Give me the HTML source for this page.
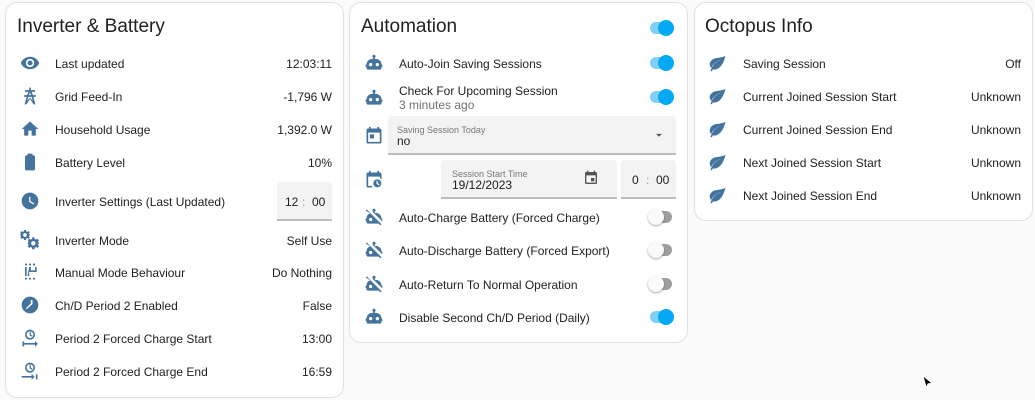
<!DOCTYPE html>
<html><head><meta charset="utf-8">
<style>
*{box-sizing:border-box;margin:0;padding:0}
body{width:1035px;height:400px;background:#fafafa;font-family:"Liberation Sans",sans-serif;color:#212121;position:relative;overflow:hidden}
.card{position:absolute;background:#fff;border:1px solid #e0e0e0;border-radius:12px}
.t{position:absolute;font-size:19px;color:#212121}
.ic{position:absolute;width:20px;height:20px;fill:#44739e}
.l{position:absolute;font-size:12px;line-height:14px;white-space:nowrap;margin-top:1px}
.v{position:absolute;font-size:12px;line-height:14px;text-align:right;white-space:nowrap;margin-top:1px}
.sw{position:absolute;width:26px;height:20px}
.sw .tr{position:absolute;left:2px;top:4px;width:22px;height:12px;border-radius:6px}
.sw .k{position:absolute;top:2px;width:16px;height:16px;border-radius:50%}
.on .tr{background:#7fd0f7}.on .k{left:10px;background:#03a9f4}
.off .tr{background:#9e9e9e}.off .k{left:0px;background:#fafafa;box-shadow:0 1px 2px rgba(0,0,0,.35)}
.fld{position:absolute;background:#f3f3f3;border-bottom:2px solid #bdbdbd;border-radius:4px 4px 0 0}
</style></head><body>

<!-- Card 1 -->
<div class="card" style="left:5px;top:2px;width:339px;height:396px"></div>
<div class="t" style="left:17px;top:16px">Inverter &amp; Battery</div>
<svg class="ic" style="left:20px;top:53px" viewBox="0 0 24 24"><path d="M12,9A3,3 0 0,0 9,12A3,3 0 0,0 12,15A3,3 0 0,0 15,12A3,3 0 0,0 12,9M12,17A5,5 0 0,1 7,12A5,5 0 0,1 12,7A5,5 0 0,1 17,12A5,5 0 0,1 12,17M12,4.5C7,4.5 2.73,7.61 1,12C2.73,16.39 7,19.5 12,19.5C17,19.5 21.27,16.39 23,12C21.27,7.61 17,4.5 12,4.5Z"/></svg>
<svg class="ic" style="left:20px;top:86px" viewBox="0 0 24 24"><path d="M11 2h2v3h5v2h-4l1.5 4H19v2h-3l2.5 9h-2.2L12 15.5 7.7 22H5.5L8 13H5v-2h3.5L10 7H6V5h5V2m1 5.5L10.8 11h2.4L12 7.5m-2 5.5l-1.2 4.5L12 14l3.2 3.5L14 13h-4z"/></svg>
<svg class="ic" style="left:20px;top:119px" viewBox="0 0 24 24"><path d="M10,20V14H14V20H19V12H22L12,3L2,12H5V20H10Z"/></svg>
<svg class="ic" style="left:20px;top:152px" viewBox="0 0 24 24"><path d="M16.67,4H15V2H9V4H7.33A1.33,1.33 0 0,0 6,5.33V20.67C6,21.4 6.6,22 7.33,22H16.67A1.33,1.33 0 0,0 18,20.67V5.33C18,4.6 17.4,4 16.67,4Z"/></svg>
<svg class="ic" style="left:20px;top:191px" viewBox="0 0 24 24"><path d="M12,2A10,10 0 0,0 2,12A10,10 0 0,0 12,22A10,10 0 0,0 22,12A10,10 0 0,0 12,2M16.2,16.2L11,13V7H12.5V12.2L17,14.9L16.2,16.2Z"/></svg>
<svg class="ic" style="left:20px;top:230px" viewBox="0 0 24 24"><g transform="translate(6,6) scale(.55) translate(-12,-12)"><path d="M12 8a4 4 0 1 0 0 8 4 4 0 0 0 0-8zM10 1h4l.6 3 2.4 1.2 2.6-1.6 2.8 2.8-1.6 2.6L22 11.4l1 .6v0h0v0l-1 .6-1.2 2.4 1.6 2.6-2.8 2.8-2.6-1.6L14.6 20 14 23h-4l-.6-3-2.4-1.2-2.6 1.6-2.8-2.8 1.6-2.6L2 12.6 1 12l1-.6L3.2 9 1.6 6.4l2.8-2.8L7 5.2 9.4 4z" fill-rule="evenodd"/></g><g transform="translate(16,16) scale(.65) translate(-12,-12)"><path d="M12 8a4 4 0 1 0 0 8 4 4 0 0 0 0-8zM10 1h4l.6 3 2.4 1.2 2.6-1.6 2.8 2.8-1.6 2.6L22 11.4l1 .6l-1 .6-1.2 2.4 1.6 2.6-2.8 2.8-2.6-1.6L14.6 20 14 23h-4l-.6-3-2.4-1.2-2.6 1.6-2.8-2.8 1.6-2.6L2 12.6 1 12l1-.6L3.2 9 1.6 6.4l2.8-2.8L7 5.2 9.4 4z" fill-rule="evenodd"/></g></svg>
<svg class="ic" style="left:20px;top:262px" viewBox="0 0 24 24"><path d="M6 2h2.5v2H6zm4.75 0h2.5v2h-2.5zM15.5 2H18v2h-2.5zM6 19h2.5v2H6zm4.75 0h2.5v2h-2.5zM6 6h2v11H6zm5 0h2v4h5V6h2v6h-9v5h-2zM15.5 19H18v2h-2.5z"/></svg>
<svg class="ic" style="left:20px;top:295px" viewBox="0 0 24 24"><path d="M12,2A10,10 0 0,0 2,12A10,10 0 0,0 12,22A10,10 0 0,0 22,12A10,10 0 0,0 12,2M8,17L7,16L13,10V6H15V11Z"/></svg>
<svg class="ic" style="left:20px;top:328px" viewBox="0 0 24 24"><path d="M12 2a6 6 0 1 1 0 12 6 6 0 0 1 0-12m0 2a4 4 0 1 0 0 8 4 4 0 0 0 0-8m-.5 1h1.5v3l2 1.2-.7 1.2-2.8-1.6zM3 16h2v2h13v-2.5l3.5 3.5L18 22.5V20H5v2H3z"/></svg>
<svg class="ic" style="left:20px;top:361px" viewBox="0 0 24 24"><path d="M12 2a6 6 0 1 1 0 12 6 6 0 0 1 0-12m0 2a4 4 0 1 0 0 8 4 4 0 0 0 0-8m-.5 1h1.5v3l2 1.2-.7 1.2-2.8-1.6zM2 18h12v-2.5l3.5 3.5L14 22.5V20H2zm17-2h2v6h-2z"/></svg>
<div class="l" style="left:55px;top:56px">Last updated</div><div class="v" style="right:703px;top:56px">12:03:11</div>
<div class="l" style="left:55px;top:89px">Grid Feed-In</div><div class="v" style="right:703px;top:89px">-1,796 W</div>
<div class="l" style="left:55px;top:122px">Household Usage</div><div class="v" style="right:703px;top:122px">1,392.0 W</div>
<div class="l" style="left:55px;top:155px">Battery Level</div><div class="v" style="right:703px;top:155px">10%</div>
<div class="l" style="left:55px;top:194px">Inverter Settings (Last Updated)</div>
<div class="fld" style="left:277px;top:182px;width:55px;height:39px"></div>
<div class="l" style="left:285px;top:194px">12</div><div class="l" style="left:302px;top:194px;color:#999">:</div><div class="l" style="left:312px;top:194px">00</div>
<div class="l" style="left:55px;top:233px">Inverter Mode</div><div class="v" style="right:703px;top:233px">Self Use</div>
<div class="l" style="left:55px;top:265px">Manual Mode Behaviour</div><div class="v" style="right:703px;top:265px">Do Nothing</div>
<div class="l" style="left:55px;top:298px">Ch/D Period 2 Enabled</div><div class="v" style="right:703px;top:298px">False</div>
<div class="l" style="left:55px;top:331px">Period 2 Forced Charge Start</div><div class="v" style="right:703px;top:331px">13:00</div>
<div class="l" style="left:55px;top:364px">Period 2 Forced Charge End</div><div class="v" style="right:703px;top:364px">16:59</div>

<!-- Card 2 -->
<div class="card" style="left:349px;top:2px;width:339px;height:341px"></div>
<div class="t" style="left:361px;top:16px">Automation</div>
<div class="sw on" style="left:648px;top:18px"><div class="tr"></div><div class="k"></div></div>
<svg class="ic" style="left:364px;top:53px" viewBox="0 0 24 24"><path d="M12 2a2 2 0 0 1 1 3.7V7h1a7 7 0 0 1 7 7h1v3h-1v1a2 2 0 0 1-2 2H5a2 2 0 0 1-2-2v-1H2v-3h1a7 7 0 0 1 7-7h1V5.7A2 2 0 0 1 12 2M8 12a2 2 0 1 0 0 4 2 2 0 0 0 0-4m8 0a2 2 0 1 0 0 4 2 2 0 0 0 0-4z"/></svg>
<svg class="ic" style="left:364px;top:88px" viewBox="0 0 24 24"><path d="M12 2a2 2 0 0 1 1 3.7V7h1a7 7 0 0 1 7 7h1v3h-1v1a2 2 0 0 1-2 2H5a2 2 0 0 1-2-2v-1H2v-3h1a7 7 0 0 1 7-7h1V5.7A2 2 0 0 1 12 2M8 12a2 2 0 1 0 0 4 2 2 0 0 0 0-4m8 0a2 2 0 1 0 0 4 2 2 0 0 0 0-4z"/></svg>
<div class="l" style="left:399px;top:56px">Auto-Join Saving Sessions</div>
<div class="sw on" style="left:648px;top:53px"><div class="tr"></div><div class="k"></div></div>
<div class="l" style="left:399px;top:83px">Check For Upcoming Session</div>
<div class="l" style="left:399px;top:97px;color:#727272">3 minutes ago</div>
<div class="sw on" style="left:648px;top:87px"><div class="tr"></div><div class="k"></div></div>
<svg class="ic" style="left:364px;top:126px" viewBox="0 0 24 24"><path d="M19,19H5V8H19M16,1V3H8V1H6V3H5C3.89,3 3,3.89 3,5V19A2,2 0 0,0 5,21H19A2,2 0 0,0 21,19V5C21,3.89 20.1,3 19,3H18V1M7,10H12V15H7Z"/></svg>
<div class="fld" style="left:388px;top:116px;width:288px;height:39px"></div>
<div class="l" style="left:397px;top:122px;font-size:9px;color:#777">Saving Session Today</div>
<div class="l" style="left:397px;top:133px">no</div>
<svg style="position:absolute;left:652px;top:128px;width:14px;height:14px;fill:#555" viewBox="0 0 24 24"><path d="M7,10L12,15L17,10H7Z"/></svg>
<svg class="ic" style="left:364px;top:170px" viewBox="0 0 24 24"><path d="M15 13h1.5v2.8l2.4 1.4-.8 1.2L15 16.6zM19 8H5v11h4.5a7 7 0 0 0 .5 2H5a2 2 0 0 1-2-2V5a2 2 0 0 1 2-2h1V1h2v2h8V1h2v2h1a2 2 0 0 1 2 2v6.1a7 7 0 0 0-2-1.3zm-3 3.2a4.8 4.8 0 1 0 0 9.6 4.8 4.8 0 0 0 0-9.6z"/></svg>
<div class="fld" style="left:441px;top:160px;width:176px;height:39px"></div>
<div class="l" style="left:452px;top:166px;font-size:9px;color:#777">Session Start Time</div>
<div class="l" style="left:452px;top:177px">19/12/2023</div>
<svg style="position:absolute;left:583px;top:170px;width:16px;height:16px;fill:#555" viewBox="0 0 24 24"><path d="M19,19H5V8H19M16,1V3H8V1H6V3H5C3.89,3 3,3.89 3,5V19A2,2 0 0,0 5,21H19A2,2 0 0,0 21,19V5C21,3.89 20.1,3 19,3H18V1M12,12H17V17H12Z"/></svg>
<div class="fld" style="left:621px;top:160px;width:55px;height:39px"></div>
<div class="l" style="left:632px;top:172px">0</div><div class="l" style="left:646px;top:172px;color:#999">:</div><div class="l" style="left:656px;top:172px">00</div>
<svg class="ic" style="left:364px;top:207px" viewBox="0 0 24 24"><path d="M2 4.3L3.3 3 21 20.7 19.7 22l-2-2H5a2 2 0 0 1-2-2v-1H2v-3h1a7 7 0 0 1 4.5-6.5zM12 2a2 2 0 0 1 1 3.7V7h1a7 7 0 0 1 7 7h1v3h-.3L11.4 6.7 11 7V5.7A2 2 0 0 1 12 2M8 13a2 2 0 1 0 0 4 2 2 0 0 0 0-4z"/></svg>
<svg class="ic" style="left:364px;top:240px" viewBox="0 0 24 24"><path d="M2 4.3L3.3 3 21 20.7 19.7 22l-2-2H5a2 2 0 0 1-2-2v-1H2v-3h1a7 7 0 0 1 4.5-6.5zM12 2a2 2 0 0 1 1 3.7V7h1a7 7 0 0 1 7 7h1v3h-.3L11.4 6.7 11 7V5.7A2 2 0 0 1 12 2M8 13a2 2 0 1 0 0 4 2 2 0 0 0 0-4z"/></svg>
<svg class="ic" style="left:364px;top:274px" viewBox="0 0 24 24"><path d="M2 4.3L3.3 3 21 20.7 19.7 22l-2-2H5a2 2 0 0 1-2-2v-1H2v-3h1a7 7 0 0 1 4.5-6.5zM12 2a2 2 0 0 1 1 3.7V7h1a7 7 0 0 1 7 7h1v3h-.3L11.4 6.7 11 7V5.7A2 2 0 0 1 12 2M8 13a2 2 0 1 0 0 4 2 2 0 0 0 0-4z"/></svg>
<svg class="ic" style="left:364px;top:307px" viewBox="0 0 24 24"><path d="M12 2a2 2 0 0 1 1 3.7V7h1a7 7 0 0 1 7 7h1v3h-1v1a2 2 0 0 1-2 2H5a2 2 0 0 1-2-2v-1H2v-3h1a7 7 0 0 1 7-7h1V5.7A2 2 0 0 1 12 2M8 12a2 2 0 1 0 0 4 2 2 0 0 0 0-4m8 0a2 2 0 1 0 0 4 2 2 0 0 0 0-4z"/></svg>
<div class="l" style="left:399px;top:210px">Auto-Charge Battery (Forced Charge)</div>
<div class="sw off" style="left:648px;top:207px"><div class="tr"></div><div class="k"></div></div>
<div class="l" style="left:399px;top:243px">Auto-Discharge Battery (Forced Export)</div>
<div class="sw off" style="left:648px;top:240px"><div class="tr"></div><div class="k"></div></div>
<div class="l" style="left:399px;top:277px">Auto-Return To Normal Operation</div>
<div class="sw off" style="left:648px;top:274px"><div class="tr"></div><div class="k"></div></div>
<div class="l" style="left:399px;top:310px">Disable Second Ch/D Period (Daily)</div>
<div class="sw on" style="left:648px;top:307px"><div class="tr"></div><div class="k"></div></div>

<!-- Card 3 -->
<div class="card" style="left:694px;top:2px;width:339px;height:219px"></div>
<div class="t" style="left:705px;top:16px">Octopus Info</div>
<svg class="ic" style="left:708px;top:53px" viewBox="0 0 24 24"><path d="M21 3s-3 17-14 17c-.4 0-.9-.1-1.3-.3L4.7 22 3 21.3C5 16 7.6 10.8 15.5 8.5c0 0-8.5 1.5-11.7 9.8C3.8 18.3 2 15.5 2 13.5 2 11.5 4 7.3 9 6.3 14 5.3 20 5 21 3z"/></svg>
<svg class="ic" style="left:708px;top:86px" viewBox="0 0 24 24"><path d="M21 3s-3 17-14 17c-.4 0-.9-.1-1.3-.3L4.7 22 3 21.3C5 16 7.6 10.8 15.5 8.5c0 0-8.5 1.5-11.7 9.8C3.8 18.3 2 15.5 2 13.5 2 11.5 4 7.3 9 6.3 14 5.3 20 5 21 3z"/></svg>
<svg class="ic" style="left:708px;top:119px" viewBox="0 0 24 24"><path d="M21 3s-3 17-14 17c-.4 0-.9-.1-1.3-.3L4.7 22 3 21.3C5 16 7.6 10.8 15.5 8.5c0 0-8.5 1.5-11.7 9.8C3.8 18.3 2 15.5 2 13.5 2 11.5 4 7.3 9 6.3 14 5.3 20 5 21 3z"/></svg>
<svg class="ic" style="left:708px;top:152px" viewBox="0 0 24 24"><path d="M21 3s-3 17-14 17c-.4 0-.9-.1-1.3-.3L4.7 22 3 21.3C5 16 7.6 10.8 15.5 8.5c0 0-8.5 1.5-11.7 9.8C3.8 18.3 2 15.5 2 13.5 2 11.5 4 7.3 9 6.3 14 5.3 20 5 21 3z"/></svg>
<svg class="ic" style="left:708px;top:185px" viewBox="0 0 24 24"><path d="M21 3s-3 17-14 17c-.4 0-.9-.1-1.3-.3L4.7 22 3 21.3C5 16 7.6 10.8 15.5 8.5c0 0-8.5 1.5-11.7 9.8C3.8 18.3 2 15.5 2 13.5 2 11.5 4 7.3 9 6.3 14 5.3 20 5 21 3z"/></svg>
<div class="l" style="left:743px;top:56px">Saving Session</div><div class="v" style="right:14px;top:56px">Off</div>
<div class="l" style="left:743px;top:89px">Current Joined Session Start</div><div class="v" style="right:14px;top:89px">Unknown</div>
<div class="l" style="left:743px;top:122px">Current Joined Session End</div><div class="v" style="right:14px;top:122px">Unknown</div>
<div class="l" style="left:743px;top:155px">Next Joined Session Start</div><div class="v" style="right:14px;top:155px">Unknown</div>
<div class="l" style="left:743px;top:188px">Next Joined Session End</div><div class="v" style="right:14px;top:188px">Unknown</div>

<!-- cursor -->
<svg style="position:absolute;left:922px;top:375px;width:12px;height:15px" viewBox="0 0 14 18"><path d="M1 1L12 10L7 10.5L5 15Z" fill="#000" stroke="#fff" stroke-width="1"/></svg>
</body></html>
